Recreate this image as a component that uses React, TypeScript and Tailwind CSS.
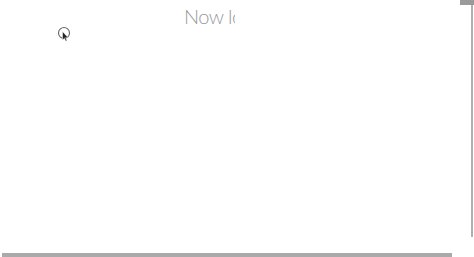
export default function App() {
  return (
    <div className="relative w-[474px] h-[257px] bg-white overflow-hidden font-['Lato',sans-serif]">
      {/* heading, clipped by its box */}
      <div className="absolute left-[184px] top-[4px] w-[51px] overflow-hidden whitespace-nowrap text-[20px] font-light leading-[24px] tracking-[-0.5px] text-[#999999]">
        Now lo
      </div>

      {/* cursor */}
      <svg className="absolute left-[57px] top-[26px]" width="16" height="17" viewBox="0 0 16 17">
        <circle cx="7" cy="7" r="5.5" fill="none" stroke="#666" strokeWidth="1.1" />
        <path d="M5.5 5.5 L5.5 14 L7.4 12.2 L8.8 15.2 L10 14.6 L8.6 11.7 L11.2 11.7 Z" fill="#222" stroke="#fff" strokeWidth="0.5" />
      </svg>

      {/* top right label */}
      <div className="absolute right-0 top-0 h-[5px] w-[14px] bg-[#9a9a9a]" />

      {/* vertical scrollbar */}
      <div className="absolute left-[471px] top-[5px] h-[232px] w-[2px] bg-[#b0b0b0]" />

      {/* bottom bar */}
      <div className="absolute left-[2px] top-[253px] h-[4px] w-[450px] bg-[#aaaaaa]" />
    </div>
  );
}
